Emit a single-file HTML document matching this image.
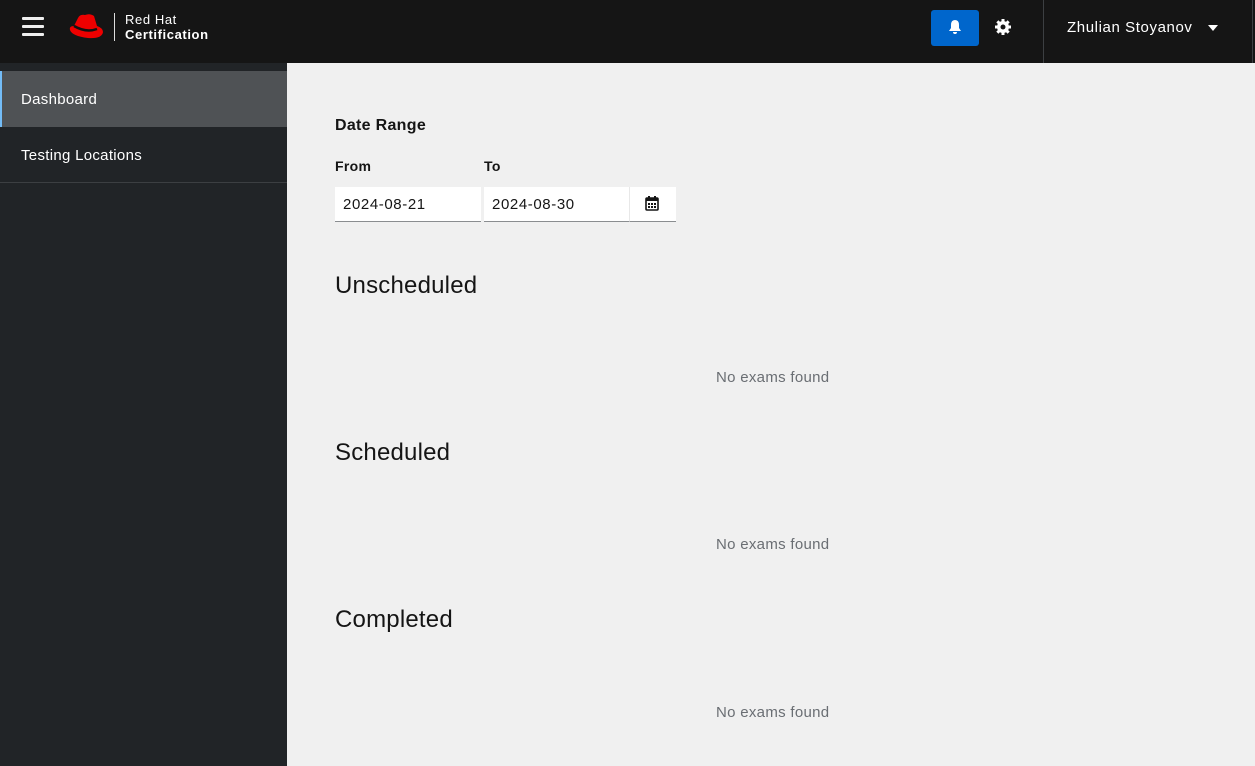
<!DOCTYPE html>
<html><head><meta charset="utf-8"><style>
*{box-sizing:border-box;margin:0;padding:0}
body{width:1255px;height:766px;overflow:hidden;font-family:"Liberation Sans",sans-serif;background:#f0f0f0;position:relative;letter-spacing:0.3px}
.top{position:absolute;left:0;top:0;width:1255px;height:63px;background:#151515}
.side{position:absolute;left:0;top:63px;width:287px;height:703px;background:#212427}
.nav{position:absolute;left:0;width:287px;height:56px;color:#fff;font-size:15px;padding-left:21px;line-height:58px}
.main{position:absolute;left:287px;top:63px;right:0;bottom:0;background:#f0f0f0}
.abs{position:absolute}
h2{position:absolute;font-weight:normal;font-size:24px;color:#151515;left:335px;letter-spacing:0.2px}
.empty{position:absolute;left:716px;font-size:15px;color:#6a6e73;top:0}
.inp{position:absolute;top:187px;height:35px;background:#fff;border-bottom:1px solid #8a8d90;font-size:15px;color:#151515;line-height:36px;padding-left:8px;letter-spacing:0.6px}
</style></head><body>
<div class="top">
  <div class="abs" style="left:22px;top:17px;width:22px;height:3px;background:#eee;border-radius:1px"></div>
  <div class="abs" style="left:22px;top:25px;width:22px;height:3px;background:#eee;border-radius:1px"></div>
  <div class="abs" style="left:22px;top:33px;width:22px;height:3px;background:#eee;border-radius:1px"></div>
  <svg class="abs" style="left:68px;top:13px" width="37" height="28" viewBox="0 0 37 28">
    <path d="M10 5 Q12 1 17 2 Q22 0 26 3 L29 13 Q35 15 35 19 Q34 26 20 25 Q4 23 2 17 Q1 13 6 13 Z" fill="#e00"/>
    <path d="M6 13 Q18 20 29 16" stroke="#111" stroke-width="2.5" fill="none"/>
  </svg>
  <div class="abs" style="left:114px;top:13px;width:1px;height:28px;background:#ddd"></div>
  <div class="abs" style="left:125px;top:12px;color:#fff;font-size:13px;line-height:15px;letter-spacing:0.6px">Red Hat<br><b>Certification</b></div>
  <div class="abs" style="left:931px;top:10px;width:48px;height:36px;background:#0066cc;border-radius:3px"></div>
  <svg class="abs" style="left:947px;top:19px" width="16" height="16" viewBox="0 0 16 16"><path d="M8 1 Q4 1 4 6 L4 9 L2 12 L14 12 L12 9 L12 6 Q12 1 8 1Z M6 13 L10 13 Q10 15 8 15 Q6 15 6 13Z" fill="#fff"/></svg>
  <svg class="abs" style="left:994px;top:18px" width="18" height="18" viewBox="0 0 18 18"><g fill="#fff"><circle cx="9" cy="9" r="6"/><rect x="7.5" y="1" width="3" height="16"/><rect x="1" y="7.5" width="16" height="3"/><rect x="7.5" y="1" width="3" height="16" transform="rotate(45 9 9)"/><rect x="7.5" y="1" width="3" height="16" transform="rotate(-45 9 9)"/></g><circle cx="9" cy="9" r="2.5" fill="#151515"/></svg>
  <div class="abs" style="left:1043px;top:0;width:1px;height:63px;background:#3c3f42"></div>
  <div class="abs" style="left:1067px;top:19px;color:#fff;font-size:15px;letter-spacing:0.6px">Zhulian Stoyanov</div>
  <div class="abs" style="left:1208px;top:25px;width:0;height:0;border-left:5px solid transparent;border-right:5px solid transparent;border-top:6px solid #fff"></div>
  <div class="abs" style="left:1252px;top:0;width:1px;height:63px;background:#3c3f42"></div>
</div>
<div class="side">
  <div class="nav" style="top:8px;background:#4f5255;border-left:2px solid #73bcf7;padding-left:19px">Dashboard</div>
  <div class="nav" style="top:64px;border-bottom:1px solid #3c3f42">Testing Locations</div>
</div>
<div class="main"></div>
<div class="abs" style="left:335px;top:117px;font-size:16px;font-weight:bold;color:#151515">Date Range</div>
<div class="abs" style="left:335px;top:158px;font-size:14px;font-weight:bold;color:#151515">From</div>
<div class="abs" style="left:484px;top:158px;font-size:14px;font-weight:bold;color:#151515">To</div>
<div class="inp" style="left:335px;width:146px">2024-08-21</div>
<div class="inp" style="left:484px;width:145px">2024-08-30</div>
<div class="inp" style="left:629px;width:47px;border-left:1px solid #e8e8e8;padding:0"></div>
<svg class="abs" style="left:645px;top:196px" width="14" height="15" viewBox="0 0 14 15"><rect x="1" y="2" width="12" height="12" rx="1" fill="none" stroke="#151515" stroke-width="1.6"/><rect x="1" y="2" width="12" height="3" fill="#151515"/><rect x="3" y="0" width="2" height="3" fill="#151515"/><rect x="9" y="0" width="2" height="3" fill="#151515"/><g fill="#151515"><rect x="3" y="7" width="2" height="2"/><rect x="6" y="7" width="2" height="2"/><rect x="9" y="7" width="2" height="2"/><rect x="3" y="10" width="2" height="2"/><rect x="6" y="10" width="2" height="2"/><rect x="9" y="10" width="2" height="2"/></g></svg>
<h2 style="top:272px">Unscheduled</h2>
<div class="empty" style="top:369px">No exams found</div>
<h2 style="top:439px">Scheduled</h2>
<div class="empty" style="top:536px">No exams found</div>
<h2 style="top:606px">Completed</h2>
<div class="empty" style="top:704px">No exams found</div>
</body></html>
